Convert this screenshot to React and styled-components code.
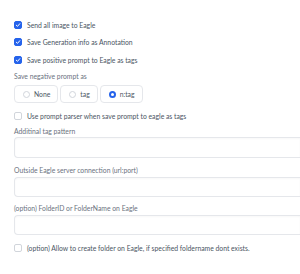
import React from 'react';
import styled, { createGlobalStyle } from 'styled-components';

const Global = createGlobalStyle`
  html, body {
    margin: 0;
    padding: 0;
    background: #ffffff;
    overflow: hidden;
  }
  body {
    font-family: Lato, "Noto Sans", sans-serif;
  }
`;

const Panel = styled.div`
  display: flex;
  flex-direction: column;
  padding: 16px 0 0 14px;
  width: 300px;
  box-sizing: border-box;
`;

const CheckRow = styled.label`
  display: flex;
  align-items: center;
  gap: 5px;
  height: 17.5px;
  font-size: 6.8px;
  color: #4b5563;
  white-space: nowrap;
  margin-top: ${p => p.$mt || 0}px;
`;

const Box = styled.span`
  width: 8px;
  height: 8px;
  box-sizing: border-box;
  border-radius: 2px;
  flex-shrink: 0;
  display: flex;
  align-items: center;
  justify-content: center;
  background: ${p => (p.$checked ? '#2563eb' : '#ffffff')};
  border: 1px solid ${p => (p.$checked ? '#2563eb' : '#d1d5db')};
`;

const Label = styled.div`
  font-size: 6.8px;
  line-height: 9px;
  color: #6b7280;
  white-space: nowrap;
  margin-top: ${p => p.$mt || 0}px;
`;

const RadioGroup = styled.div`
  display: flex;
  gap: 2px;
  margin-top: 4.5px;
  height: 18px;
`;

const RadioItem = styled.label`
  display: flex;
  align-items: center;
  gap: 4px;
  padding: 0 7px 0 8px;
  border: 1px solid #e5e7eb;
  border-radius: 4px;
  font-size: 6.8px;
  color: #4b5563;
  box-sizing: border-box;
  background: #ffffff;
`;

const Dot = styled.span`
  width: 7px;
  height: 7px;
  box-sizing: border-box;
  border-radius: 50%;
  flex-shrink: 0;
  background: #ffffff;
  border: ${p => (p.$on ? '2px solid #2563eb' : '1px solid #d1d5db')};
`;

const Input = styled.div`
  height: ${p => p.$h || 21}px;
  box-sizing: border-box;
  border: 1px solid #e5e7eb;
  border-right: none;
  border-radius: 4px 0 0 4px;
  background: #ffffff;
  box-shadow: inset 0 1px 2px rgba(0, 0, 0, 0.03);
  margin-top: ${p => p.$mt || 2}px;
`;

const Tick = () => (
  <svg width="6" height="6" viewBox="0 0 12 12">
    <path d="M2.5 6.3 L5 8.7 L9.6 3.4" fill="none" stroke="#fff" strokeWidth="2" strokeLinecap="round" strokeLinejoin="round" />
  </svg>
);

const Check = ({ checked, children, mt }) => (
  <CheckRow $mt={mt}>
    <Box $checked={checked}>{checked && <Tick />}</Box>
    {children}
  </CheckRow>
);

const App = () => (
  <>
    <Global />
    <Panel>
      <Check checked>Send all image to Eagle</Check>
      <Check checked>Save Generation info as Annotation</Check>
      <Check checked>Save positive prompt to Eagle as tags</Check>
      <Label $mt={3}>Save negative prompt as</Label>
      <RadioGroup>
        <RadioItem><Dot />None</RadioItem>
        <RadioItem><Dot />tag</RadioItem>
        <RadioItem><Dot $on />n:tag</RadioItem>
      </RadioGroup>
      <Check mt={3.75}>Use prompt parser when save prompt to eagle as tags</Check>
      <Label $mt={2.25}>Additinal tag pattern</Label>
      <Input $mt={1.5} />
      <Label $mt={7.5}>Outside Eagle server connection (url:port)</Label>
      <Input $mt={2.5} $h={20} />
      <Label $mt={6.5}>(option) FolderID or FolderName on Eagle</Label>
      <Input $mt={2.5} $h={20} />
      <Check mt={4.25}>(option) Allow to create folder on Eagle, if specified foldername dont exists.</Check>
    </Panel>
  </>
);

export default App;
